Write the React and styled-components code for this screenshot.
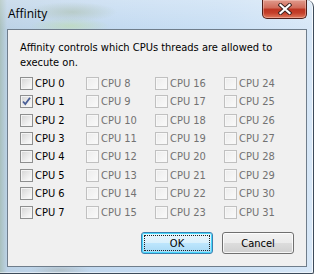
import React from 'react';
import styled, { createGlobalStyle } from 'styled-components';

const GlobalStyle = createGlobalStyle`
    html, body {
        margin: 0;
        padding: 0;
        background: #ffffff;
    }
`;

const Window = styled.div`
    width: 314px;
    height: 274px;
    box-sizing: border-box;
    display: flex;
    flex-direction: column;
    padding: 0 6px 6px 7px;
    border-right: 1px solid #3d4b5a;
    border-bottom: 1px solid #3d4b5a;
    border-top-right-radius: 7px;
    border-bottom-right-radius: 2px;
    background:
        radial-gradient(ellipse 45px 10px at 72px 12px, rgba(170, 190, 170, 0.55), transparent),
        radial-gradient(ellipse 40px 8px at 70px 26px, rgba(190, 220, 170, 0.6), transparent),
        radial-gradient(ellipse 30px 6px at 60px 270px, rgba(170, 180, 180, 0.6), transparent),
        linear-gradient(to bottom, rgba(255, 255, 255, 0.25), transparent 30px),
        linear-gradient(to right, #a9c0bd 0px, #bcd2e6 7px, #c3daf1 120px, #c9dff4 220px, #d7e7f7 100%);
    box-shadow: inset -1px 0 0 rgba(255, 255, 255, 0.7), inset 0 -1px 0 rgba(255, 255, 255, 0.5);
`;

const TitleBar = styled.div`
    height: 29px;
    display: flex;
    justify-content: space-between;
    align-items: flex-start;
`;

const Title = styled.div`
    font-family: "Open Sans", "Noto Sans", sans-serif;
    font-size: 12px;
    color: #000000;
    padding: 6px 0 0 1px;
    line-height: 16px;
`;

const CloseButton = styled.div`
    width: 45px;
    height: 19px;
    box-sizing: border-box;
    border: 1px solid #4e1f1a;
    border-top: none;
    border-radius: 0 0 5px 5px;
    background: linear-gradient(to bottom, #e09a8c 0%, #d06a58 45%, #bd3522 50%, #c43f2a 72%, #e07a5e 100%);
    box-shadow: inset 0 0 0 1px rgba(255, 220, 210, 0.4);
    display: flex;
    align-items: center;
    justify-content: center;
`;

const Client = styled.div`
    flex: 1;
    display: flex;
    flex-direction: column;
    border: 1px solid #6f7d8b;
    background: #f0f0f0;
    padding: 10px 12px 12px 12px;
    font-family: "DejaVu Sans Condensed", "DejaVu Sans", sans-serif;
    font-stretch: condensed;
    font-size: 11px;
    color: #000000;
`;

const Intro = styled.p`
    margin: 0;
    line-height: 15px;
    width: 260px;
`;

const Grid = styled.div`
    margin-top: 7px;
    display: grid;
    grid-template-columns: 66px 69px 69px 1fr;
    grid-template-rows: repeat(8, 13px);
    grid-auto-flow: column;
    row-gap: 5.36px;
`;

const Option = styled.label`
    display: flex;
    align-items: center;
    gap: 2px;
    height: 13px;
    line-height: 13px;
    color: ${(props) => (props.disabled ? '#727272' : '#000000')};
    white-space: nowrap;
`;

const Box = styled.span`
    width: 13px;
    height: 13px;
    box-sizing: border-box;
    flex: none;
    display: flex;
    align-items: center;
    justify-content: center;
    border: 1px solid ${(props) => (props.disabled ? '#c0c0c0' : '#8e8f8f')};
    background: ${(props) =>
        props.disabled
            ? 'linear-gradient(135deg, #ececec, #fafafa)'
            : 'linear-gradient(135deg, #d4d4d4, #f6f6f6 80%)'};
    box-shadow: inset 0 0 0 1px ${(props) => (props.disabled ? '#f7f7f7' : '#f4f4f4')};
`;

const Buttons = styled.div`
    margin-top: auto;
    display: flex;
    justify-content: flex-end;
    gap: 9px;
`;

const Button = styled.div`
    width: 72px;
    height: 22px;
    box-sizing: border-box;
    position: relative;
    display: flex;
    align-items: center;
    justify-content: center;
    border: 1px solid ${(props) => (props.primary ? '#3c7fb1' : '#707070')};
    border-radius: 3px;
    background: ${(props) =>
        props.primary
            ? 'linear-gradient(to bottom, #eaf6fd 0%, #d9f0fc 50%, #bee6fd 50%, #a7d9f5 100%)'
            : 'linear-gradient(to bottom, #f2f2f2 0%, #ebebeb 50%, #dddddd 50%, #cfcfcf 100%)'};
    box-shadow: inset 0 0 0 1px ${(props) => (props.primary ? '#48d8fb' : 'rgba(255, 255, 255, 0.8)')};
    font-size: 11px;
    color: #000000;
`;

const Focus = styled.span`
    position: absolute;
    inset: 2px;
    border: 1px dotted #202020;
`;

const Check = () => (
    <svg width="11" height="11" viewBox="0 0 11 11">
        <path d="M2 5.5 L4.3 8 L9 1.8" fill="none" stroke="#4a5f97" strokeWidth="1.8" />
    </svg>
);

const CloseX = () => (
    <svg width="14" height="12" viewBox="0 0 14 12">
        <path d="M2.5 2 L11.5 10 M11.5 2 L2.5 10" stroke="#3a2320" strokeWidth="4" strokeLinecap="square" />
        <path d="M2.5 2 L11.5 10 M11.5 2 L2.5 10" stroke="#ffffff" strokeWidth="2.2" strokeLinecap="square" />
    </svg>
);

const cpus = Array.from({ length: 32 }, (_, i) => i);

export default function App() {
    return (
        <>
            <GlobalStyle />
            <Window>
                <TitleBar>
                    <Title>Affinity</Title>
                    <CloseButton>
                        <CloseX />
                    </CloseButton>
                </TitleBar>
                <Client>
                    <Intro>Affinity controls which CPUs threads are allowed to execute on.</Intro>
                    <Grid>
                        {cpus.map((n) => {
                            const disabled = n > 7;
                            return (
                                <Option key={n} disabled={disabled}>
                                    <Box disabled={disabled}>{n === 1 ? <Check /> : null}</Box>
                                    <span>CPU {n}</span>
                                </Option>
                            );
                        })}
                    </Grid>
                    <Buttons>
                        <Button primary>
                            <Focus />
                            OK
                        </Button>
                        <Button>Cancel</Button>
                    </Buttons>
                </Client>
            </Window>
        </>
    );
}
